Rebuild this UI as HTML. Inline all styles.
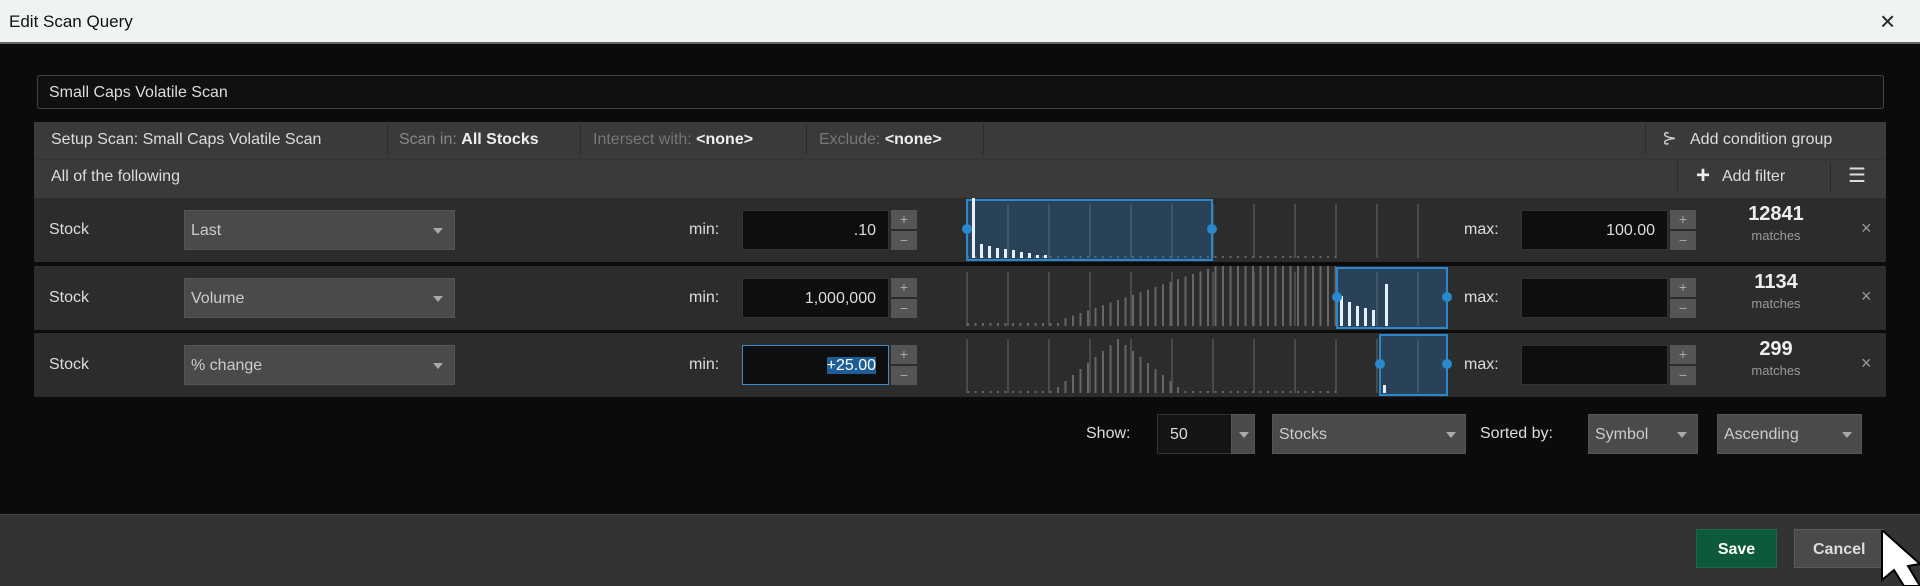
<!DOCTYPE html>
<html><head><meta charset="utf-8"><style>
*{box-sizing:border-box;margin:0;padding:0}
body{width:1920px;height:586px;background:#0b0b0b;font-family:"Liberation Sans",sans-serif;color:#ddd;position:relative;overflow:hidden;font-size:16px}
.a{position:absolute}
.title{left:0;top:0;width:1920px;height:44px;background:#eef4f2;color:#111;border-bottom:2px solid #666}
.panel{background:#3a3a3a}
.row{left:34px;width:1852px;height:64px;background:#2c2c2c}
.dd{background:#4a4a4a;height:40px;border:1px solid #555;color:#ccc;padding:11px 6px}
.inp{background:#0e0e0e;height:40px;border:1px solid #333;color:#ddd;text-align:right;padding:11px 12px}
.pm{width:26px;height:19px;background:#555;color:#aaa;font-size:14px;text-align:center;line-height:19px}
.tri{width:0;height:0;border-left:5px solid transparent;border-right:5px solid transparent;border-top:6px solid #aaa}
.cnt{width:90px;text-align:center;font-weight:bold;font-size:20px;color:#eee}
.cnt small{display:block;font-weight:normal;font-size:13px;color:#999;margin-top:2px}
.x{color:#999;font-size:18px}
.sep{width:1px;height:30px;background:#2a2a2a}
</style></head><body>
<div class="a title"><div class="a" style="left:9px;top:12px;font-size:17px">Edit Scan Query</div><div class="a" style="left:1880px;top:6px;font-size:26px;color:#222">×</div></div>
<div class="a" style="left:37px;top:75px;width:1847px;height:34px;background:#101010;border:1px solid #444;border-radius:3px;padding:8px 11px">Small Caps Volatile Scan</div>
<div class="a panel" style="left:34px;top:122px;width:1852px;height:76px"></div>
<div class="a" style="left:51px;top:131px">Setup Scan: Small Caps Volatile Scan</div>
<div class="a sep" style="left:387px;top:124px"></div>
<div class="a" style="left:399px;top:131px;color:#888">Scan in: <b style="color:#eee">All Stocks</b></div>
<div class="a sep" style="left:580px;top:124px"></div>
<div class="a" style="left:593px;top:131px;color:#777">Intersect with: <b style="color:#eee">&lt;none&gt;</b></div>
<div class="a sep" style="left:806px;top:124px"></div>
<div class="a" style="left:819px;top:131px;color:#777">Exclude: <b style="color:#eee">&lt;none&gt;</b></div>
<div class="a sep" style="left:983px;top:124px"></div>
<div class="a sep" style="left:1645px;top:124px"></div>
<div class="a" style="left:1662px;top:128px;color:#ccc;font-size:18px">⊱</div>
<div class="a" style="left:1690px;top:131px">Add condition group</div>
<div class="a" style="left:34px;top:159px;width:1852px;height:1px;background:#333"></div>
<div class="a" style="left:51px;top:168px">All of the following</div>
<div class="a sep" style="left:1677px;top:162px"></div>
<div class="a" style="left:1696px;top:162px;font-size:24px;font-weight:bold;color:#eee">+</div>
<div class="a" style="left:1722px;top:168px">Add filter</div>
<div class="a sep" style="left:1830px;top:162px"></div>
<div class="a" style="left:1848px;top:163px;font-size:20px">☰</div>

<div id="rows"></div>

<div class="a" style="left:1086px;top:425px">Show:</div>
<div class="a inp" style="left:1157px;top:414px;width:75px;text-align:left;background:#141414">50</div>
<div class="a dd" style="left:1231px;top:414px;width:24px;padding:0"><div class="a tri" style="left:7px;top:17px"></div></div>
<div class="a dd" style="left:1272px;top:414px;width:194px">Stocks<div class="a tri" style="left:173px;top:17px"></div></div>
<div class="a" style="left:1480px;top:425px">Sorted by:</div>
<div class="a dd" style="left:1588px;top:414px;width:110px">Symbol<div class="a tri" style="left:88px;top:17px"></div></div>
<div class="a dd" style="left:1717px;top:414px;width:145px">Ascending<div class="a tri" style="left:124px;top:17px"></div></div>

<div class="a" style="left:0;top:514px;width:1920px;height:72px;background:#333;border-top:1px solid #444"></div>
<div class="a" style="left:1696px;top:529px;width:81px;height:39px;background:#0d5a3a;color:#fff;font-weight:bold;text-align:center;line-height:39px;border:1px solid #1a6a4a">Save</div>
<div class="a" style="left:1794px;top:529px;width:90px;height:39px;background:#4a4a4a;color:#ddd;font-weight:bold;padding-left:18px;line-height:39px;border:1px solid #5a5a5a">Cancel</div>
<svg class="a" style="left:1880px;top:530px" width="40" height="56"><path d="M2 0 L2 50 L14 40 L24 56 L40 56 L28 36 L40 34 Z" fill="#fff" stroke="#000" stroke-width="2"/></svg>

<script>
var rows=[
 {y:198,f:"Last",min:".10",max:"100.00",c:"12841",s:[967,1212],bars:[[972,60],[980,14],[988,12],[996,10],[1004,9],[1012,8],[1020,6],[1028,5],[1036,3],[1044,3]],hist:function(i){return 2}},
 {y:266,f:"Volume",min:"1,000,000",max:"",c:"1134",s:[1337,1447],bars:[[1340,30],[1348,24],[1356,20],[1364,18],[1372,16],[1385,42]],hist:function(i){var x=i/50;return x<0.25?3:Math.min(60,(x-0.2)*130)}},
 {y:333,f:"% change",min:"+25.00",max:"",c:"299",s:[1380,1447],bars:[[1383,8]],hist:function(i){var d=Math.abs(i-20);return d>10?2:Math.max(2,54-d*6)}}
];
var h="";
rows.forEach(function(r,k){
 var y=r.y;
 h+='<div class="a row" style="top:'+y+'px"></div>';
 h+='<div class="a" style="left:49px;top:'+(y+23)+'px">Stock</div>';
 h+='<div class="a dd" style="left:184px;top:'+(y+12)+'px;width:271px">'+r.f+'<div class="a tri" style="left:248px;top:17px"></div></div>';
 h+='<div class="a" style="left:689px;top:'+(y+23)+'px">min:</div>';
 var mv=k==2?'<span style="background:#1d5f95;color:#fff">'+r.min+'</span>':r.min;
 h+='<div class="a inp" style="left:742px;top:'+(y+12)+'px;width:147px'+(k==2?';border:1px solid #3a8ed0':'')+'">'+mv+'</div>';
 h+='<div class="a pm" style="left:891px;top:'+(y+12)+'px">+</div><div class="a pm" style="left:891px;top:'+(y+33)+'px">−</div>';
 var s='<svg class="a" style="left:960px;top:'+y+'px" width="500" height="64">';
 for(var i=0;i<12;i++){var gx=7+i*41;s+='<line x1="'+gx+'" y1="6" x2="'+gx+'" y2="60" stroke="#555" stroke-width="1.5"/>';}
 for(var i=0;i<50;i++){var bh=r.hist(i);var bx=7+i*7.5;if(bx>480)break;s+='<rect x="'+bx+'" y="'+(60-bh)+'" width="2" height="'+bh+'" fill="#666"/>';}
 var x0=r.s[0]-960,x1=r.s[1]-960;
 s+='<rect x="'+x0+'" y="2" width="'+(x1-x0)+'" height="60" fill="rgba(40,110,170,0.35)" stroke="#2a88cc" stroke-width="2"/>';
 r.bars.forEach(function(b){s+='<rect x="'+(b[0]-960)+'" y="'+(60-b[1])+'" width="3" height="'+b[1]+'" fill="#e8f2ff"/>';});
 s+='<circle cx="'+x0+'" cy="31" r="5" fill="#2a88cc"/><circle cx="'+x1+'" cy="31" r="5" fill="#2a88cc"/></svg>';
 h+=s;
 h+='<div class="a" style="left:1464px;top:'+(y+23)+'px">max:</div>';
 h+='<div class="a inp" style="left:1521px;top:'+(y+12)+'px;width:147px">'+r.max+'</div>';
 h+='<div class="a pm" style="left:1670px;top:'+(y+12)+'px">+</div><div class="a pm" style="left:1670px;top:'+(y+33)+'px">−</div>';
 h+='<div class="a cnt" style="left:1731px;top:'+(y+5)+'px">'+r.c+'<small>matches</small></div>';
 h+='<div class="a x" style="left:1861px;top:'+(y+20)+'px">×</div>';
});
document.getElementById("rows").innerHTML=h;
</script>
</body></html>
